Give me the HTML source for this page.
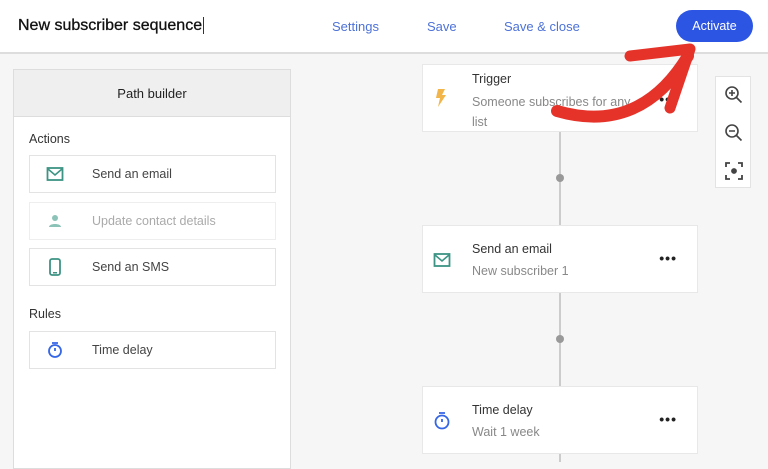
<!DOCTYPE html>
<html><head><style>
*{box-sizing:border-box;margin:0;padding:0}
body{width:768px;height:458px;overflow:hidden;background:#f6f6f6;font-family:"Liberation Sans",sans-serif;position:relative;color:#333}
.hdr{position:absolute;left:0;top:0;width:768px;height:54px;background:#fff;border-bottom:2px solid #ddd}
.t{position:absolute;top:17px;font-size:16px;color:#111;-webkit-text-stroke:0.3px #111}
.lnk{position:absolute;top:19px;font-size:13px;color:#4d72d8}
.btn{position:absolute;left:676px;top:10px;width:77px;height:32px;border-radius:16px;background:#2c55e3;color:#fff;font-size:12.5px;text-align:center;line-height:32px}
.panel{position:absolute;left:13px;top:69px;width:278px;height:400px;background:#fff;border:1px solid #ddd}
.ph{height:47px;background:#efefef;border-bottom:1px solid #ddd;text-align:center;line-height:47px;font-size:13px;color:#222}
.lbl{position:absolute;left:15px;font-size:12.5px;color:#333}
.it{position:absolute;left:15px;width:247px;height:38px;border:1px solid #e3e3e3;font-size:12.5px;line-height:36px;padding-left:62px;color:#444}
.it svg{position:absolute;left:16px;top:10px}
.card{position:absolute;left:422px;width:276px;background:#fff;border:1px solid #e8e8e8}
.card .a{position:absolute;left:49px;font-size:12.5px;color:#333}
.card .b{position:absolute;left:49px;font-size:12.5px;color:#888;line-height:20px}
.dots{position:absolute;right:20px;font-size:14px;font-weight:bold;letter-spacing:1px;color:#222}
.line{position:absolute;left:559px;width:2px;background:#ccc}
.dot{position:absolute;left:556px;width:8px;height:8px;border-radius:50%;background:#999}
.zm{position:absolute;left:715px;top:76px;width:36px;height:112px;background:#fff;border:1px solid #e3e3e3}
</style></head><body>
<div class="hdr">
<div class="t" style="left:18px">New subscriber sequence<span style="border-left:1px solid #333;margin-left:1px"></span></div>
<div class="lnk" style="left:332px">Settings</div>
<div class="lnk" style="left:427px">Save</div>
<div class="lnk" style="left:504px">Save &amp; close</div>
<div class="btn">Activate</div>
</div>
<div class="panel">
<div class="ph">Path builder</div>
<div class="lbl" style="top:62px">Actions</div>
<div class="it" style="top:85px"><svg width="18" height="16" viewBox="0 0 18 16"><rect x="1.5" y="2" width="15" height="12" fill="none" stroke="#3d9484" stroke-width="1.8"/><path d="M2 3l7 6 7-6" fill="none" stroke="#3d9484" stroke-width="1.6"/></svg>Send an email</div>
<div class="it" style="top:132px;color:#aaa;border-color:#eee"><svg width="18" height="16" viewBox="0 0 18 16"><circle cx="9" cy="5" r="3" fill="#8cc3b8"/><path d="M3 14c0-4 12-4 12 0z" fill="#8cc3b8"/></svg>Update contact details</div>
<div class="it" style="top:178px"><svg width="18" height="18" viewBox="0 0 18 18" style="top:9px"><rect x="4" y="1" width="10" height="16" rx="2" fill="none" stroke="#3d9484" stroke-width="1.8"/><rect x="7" y="14" width="4" height="1.5" fill="#3d9484"/></svg>Send an SMS</div>
<div class="lbl" style="top:237px">Rules</div>
<div class="it" style="top:261px"><svg width="18" height="18" viewBox="0 0 18 18" style="top:9px"><circle cx="9" cy="10" r="6" fill="none" stroke="#3566e6" stroke-width="1.8"/><path d="M6 2h6M9 7v3" stroke="#3566e6" stroke-width="1.8"/></svg>Time delay</div>
</div>
<div class="line" style="top:131px;height:95px"></div><div class="dot" style="top:174px"></div>
<div class="line" style="top:292px;height:95px"></div><div class="dot" style="top:335px"></div>
<div class="line" style="top:452px;height:10px"></div>
<div class="card" style="top:64px;height:68px"><svg style="position:absolute;left:12px;top:24px" width="12" height="18" viewBox="0 0 12 18"><path d="M3 0h7L7 6h4L3 18l2-9H1z" fill="#f2b54a"/></svg><div class="a" style="top:7px">Trigger</div><div class="b" style="top:27px">Someone subscribes for any<br>list</div><div class="dots" style="top:26px">•••</div></div>
<div class="card" style="top:225px;height:68px"><svg style="position:absolute;left:10px;top:26px" width="18" height="16" viewBox="0 0 18 16"><rect x="1.5" y="2" width="15" height="12" fill="none" stroke="#3d9484" stroke-width="1.8"/><path d="M2 3l7 6 7-6" fill="none" stroke="#3d9484" stroke-width="1.6"/></svg><div class="a" style="top:16px">Send an email</div><div class="b" style="top:35px">New subscriber 1</div><div class="dots" style="top:24px">•••</div></div>
<div class="card" style="top:386px;height:68px"><svg style="position:absolute;left:10px;top:24px" width="18" height="20" viewBox="0 0 18 20"><circle cx="9" cy="11" r="6.5" fill="none" stroke="#3566e6" stroke-width="1.8"/><path d="M6 2h6M9 8v3" stroke="#3566e6" stroke-width="1.8"/></svg><div class="a" style="top:16px">Time delay</div><div class="b" style="top:35px">Wait 1 week</div><div class="dots" style="top:24px">•••</div></div>
<div class="zm">
<svg style="position:absolute;left:8px;top:8px" width="20" height="20" viewBox="0 0 20 20" fill="none" stroke="#444" stroke-width="1.6"><circle cx="8" cy="8" r="6"/><path d="M12.5 12.5l5 5M5 8h6M8 5v6"/></svg>
<svg style="position:absolute;left:8px;top:46px" width="20" height="20" viewBox="0 0 20 20" fill="none" stroke="#444" stroke-width="1.6"><circle cx="8" cy="8" r="6"/><path d="M12.5 12.5l5 5M5 8h6"/></svg>
<svg style="position:absolute;left:8px;top:84px" width="20" height="20" viewBox="0 0 20 20" fill="none" stroke="#444" stroke-width="1.8"><path d="M2 6V2h4M14 2h4v4M18 14v4h-4M6 18H2v-4"/><circle cx="10" cy="10" r="2" fill="#444"/></svg>
</div>
<svg style="position:absolute;left:0;top:0" width="768" height="458" viewBox="0 0 768 458" fill="none" stroke="#e5332a" stroke-linecap="round" stroke-linejoin="round">
<path d="M557 111 Q640 135 688 56" stroke-width="12"/>
<path d="M630 56 L690 49 L670 108" stroke-width="11"/>
</svg>
</body></html>
